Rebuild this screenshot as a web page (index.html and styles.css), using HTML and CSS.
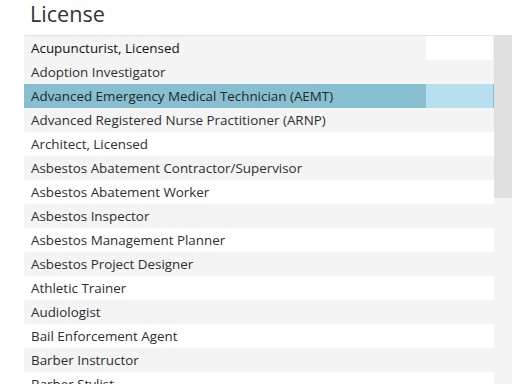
FILE: index.html
```html
<!DOCTYPE html>
<html>
<head>
<meta charset="utf-8">
<link rel="stylesheet" href="styles.css">
</head>
<body>
<h1 class="title">License</h1>
<div class="list">
  <div class="rows">
    <div class="row gray first"><span class="label">Acupuncturist, Licensed</span><span class="side white"></span></div>
    <div class="row gray"><span class="label">Adoption Investigator</span></div>
    <div class="row selected"><span class="label">Advanced Emergency Medical Technician (AEMT)</span><span class="side light"></span></div>
    <div class="row gray"><span class="label">Advanced Registered Nurse Practitioner (ARNP)</span></div>
    <div class="row"><span class="label">Architect, Licensed</span></div>
    <div class="row gray"><span class="label">Asbestos Abatement Contractor/Supervisor</span></div>
    <div class="row"><span class="label">Asbestos Abatement Worker</span></div>
    <div class="row gray"><span class="label">Asbestos Inspector</span></div>
    <div class="row"><span class="label">Asbestos Management Planner</span></div>
    <div class="row gray"><span class="label">Asbestos Project Designer</span></div>
    <div class="row"><span class="label">Athletic Trainer</span></div>
    <div class="row gray"><span class="label">Audiologist</span></div>
    <div class="row"><span class="label">Bail Enforcement Agent</span></div>
    <div class="row gray"><span class="label">Barber Instructor</span></div>
    <div class="row"><span class="label">Barber Stylist</span></div>
  </div>
  <div class="scrollbar"><div class="thumb"></div></div>
</div>
</body>
</html>
```
FILE: styles.css
```css
html, body {
  margin: 0;
  padding: 0;
  background: #ffffff;
  overflow: hidden;
}
body {
  width: 528px;
  height: 384px;
  font-family: "Open Sans", "Noto Sans", sans-serif;
}
.title {
  margin: 0;
  height: 35px;
  padding-left: 30px;
  font-size: 21.6px;
  font-weight: 400;
  line-height: 28px;
  color: #333333;
}
.list {
  display: flex;
  margin-left: 24px;
  width: 488px;
  height: 349px;
  overflow: hidden;
}
.rows {
  width: 470px;
  border-top: 1px solid #e2e2e2;
}
.row {
  display: flex;
  height: 24px;
  align-items: stretch;
  background: #ffffff;
  font-size: 13.4px;
  color: #2e2e2e;
}
.row.gray {
  background: #f4f4f4;
}
.row.first {
  color: #111111;
}
.row.selected {
  background: #86c0d0;
  color: #262626;
}
.label {
  flex: 1;
  padding-left: 7px;
  line-height: 24px;
  white-space: nowrap;
}
.side {
  width: 67px;
  margin-right: 1px;
}
.side.white {
  background: #ffffff;
}
.side.light {
  background: #b6e0f0;
}
.scrollbar {
  width: 18px;
  background: #f4f4f4;
}
.thumb {
  height: 163px;
  background: #e0e0e0;
}
```
